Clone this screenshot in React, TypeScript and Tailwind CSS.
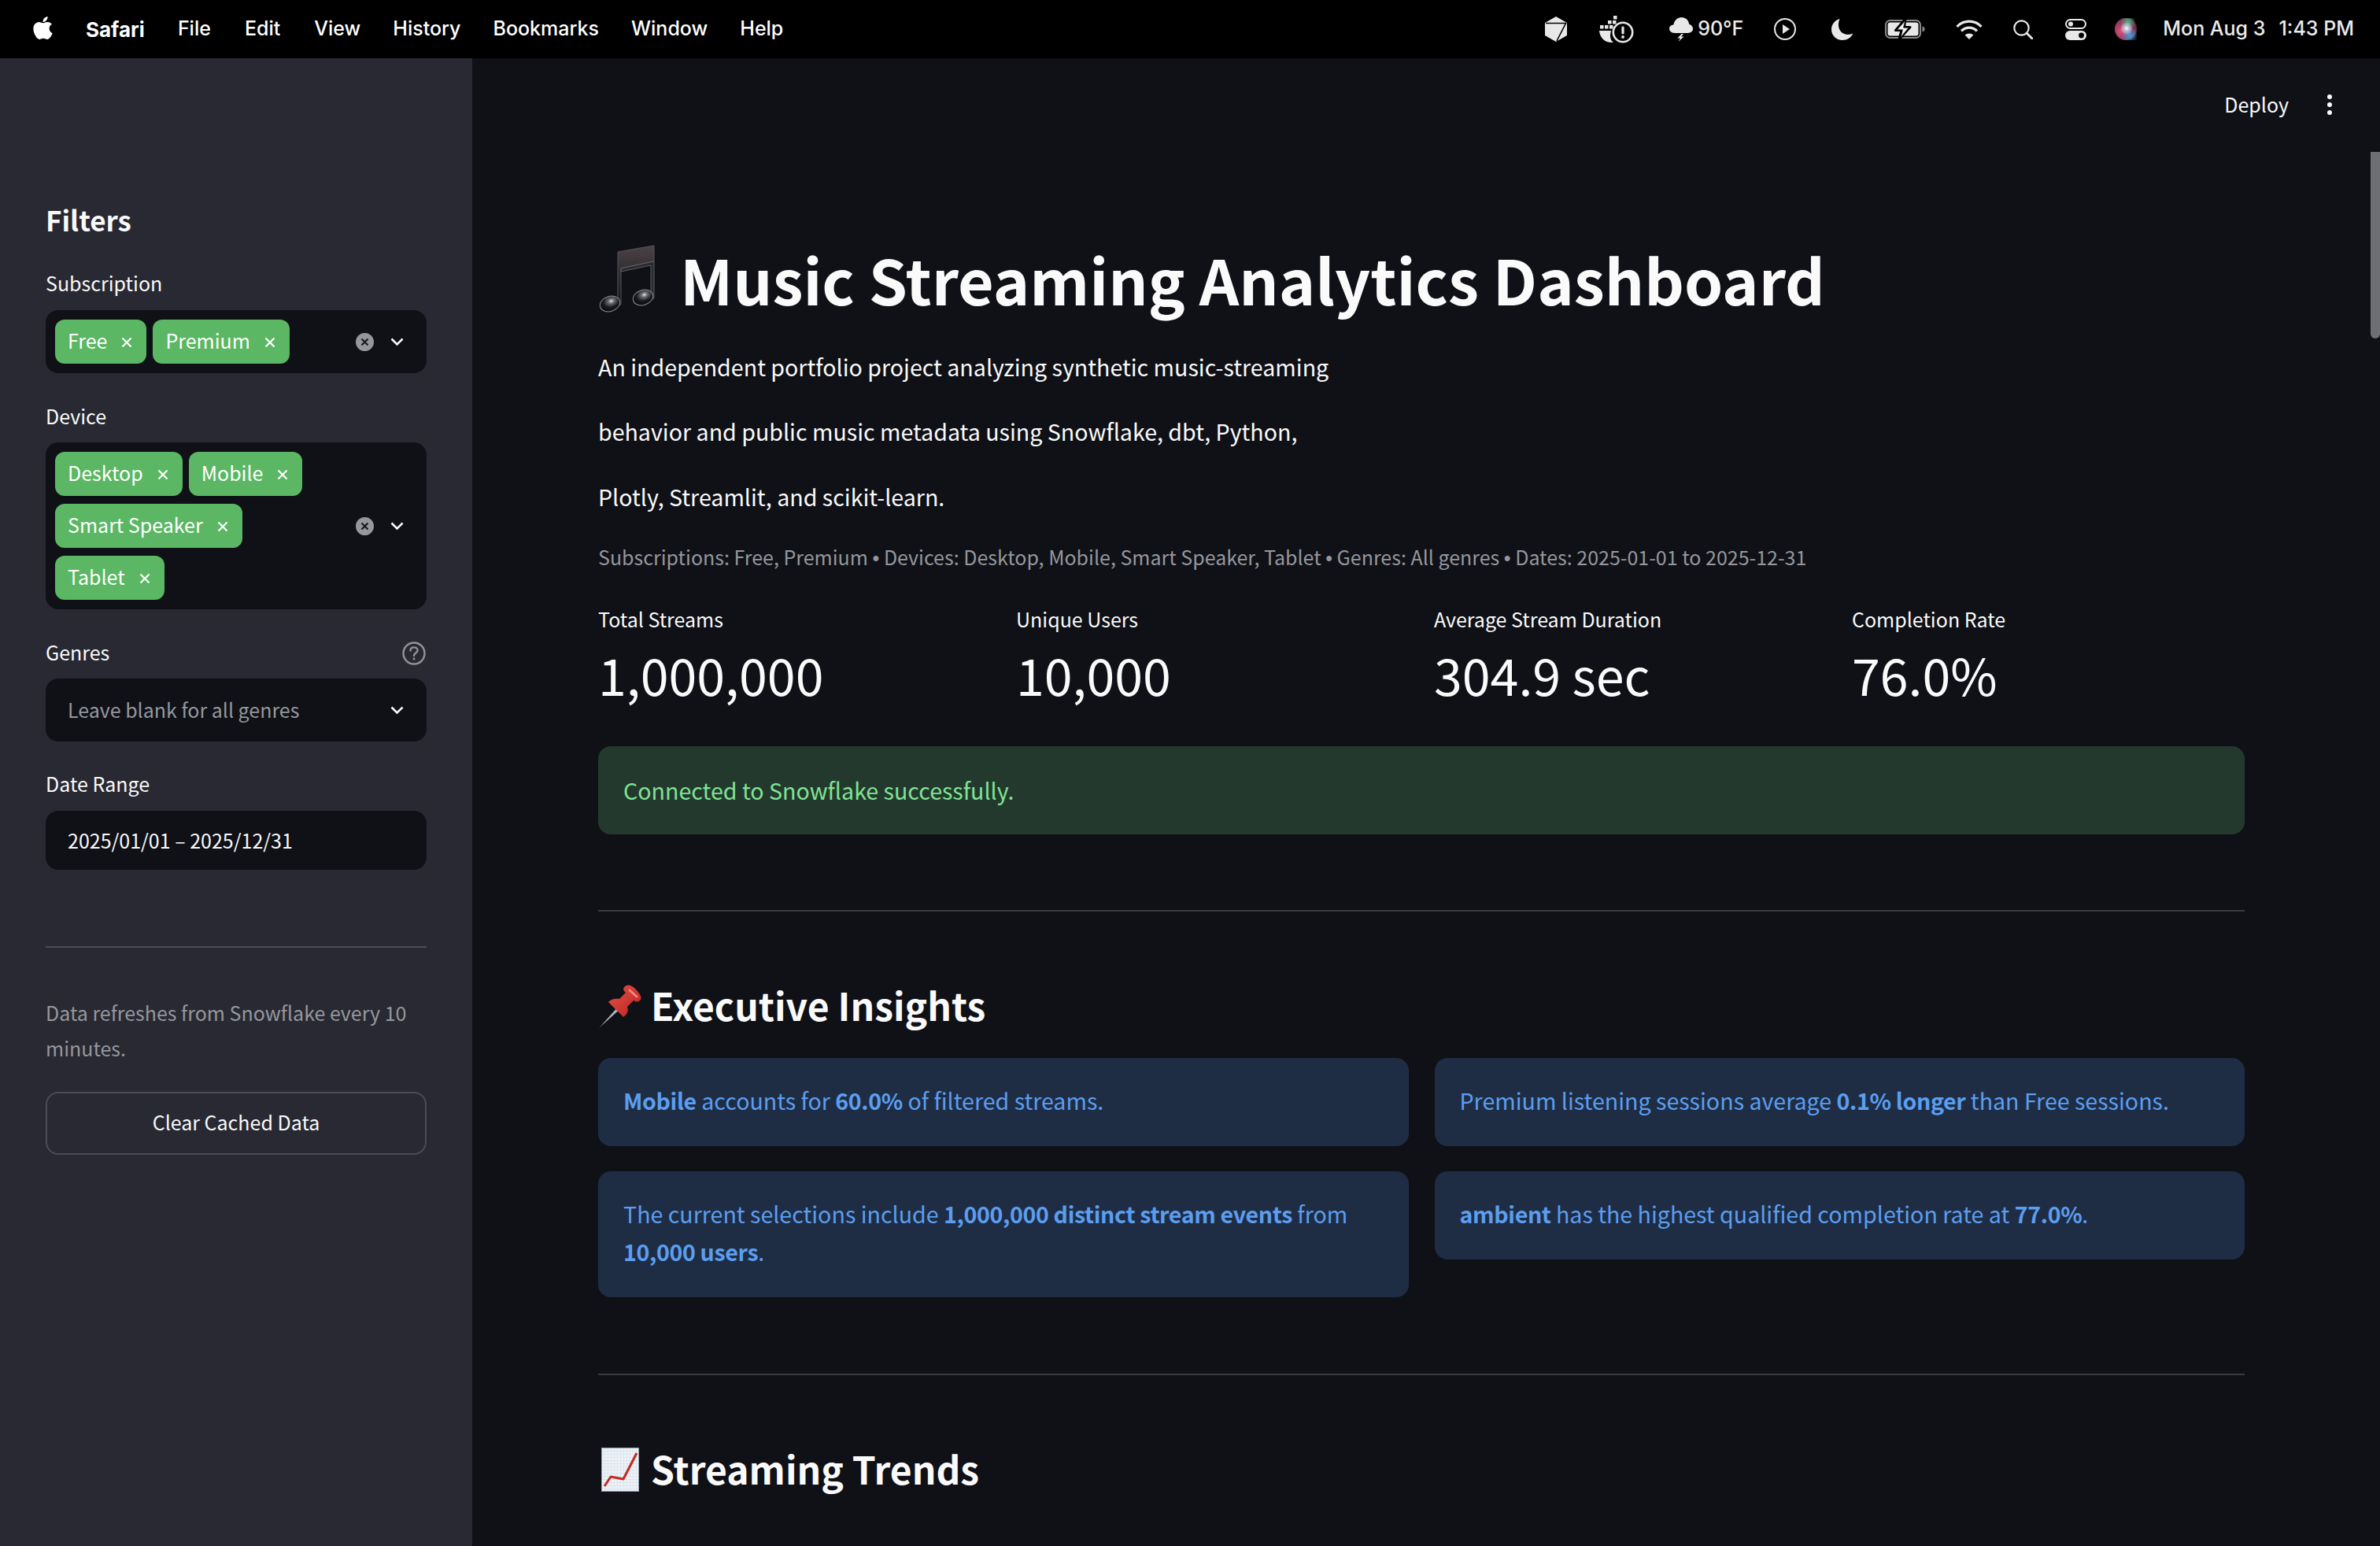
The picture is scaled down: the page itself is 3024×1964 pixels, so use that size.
import React from "react";
import { FaApple } from "react-icons/fa";

const C = "#e8e8e8";

function BoxIcon() {
  return (
    <svg width="28" height="32" viewBox="0 0 28 32" className="shrink-0">
      <path d="M14 0 L28 8 V24 L14 32 L0 24 V8 Z" fill={C} />
      <path d="M1 8.5 H26.5 L15 31" fill="none" stroke="#000" strokeWidth="1.6" />
    </svg>
  );
}
function DockerIcon() {
  return (
    <svg width="44" height="35" viewBox="0 0 44 35" className="shrink-0">
      <g fill={C}>
        <rect x="18" y="0" width="4.5" height="4.5" />
        <rect x="11" y="6" width="4.5" height="4.5" />
        <rect x="17" y="6" width="4.5" height="4.5" />
        <rect x="1" y="12" width="4.5" height="4.5" />
        <rect x="7" y="12" width="4.5" height="4.5" />
        <rect x="13" y="12" width="4.5" height="4.5" />
        <path d="M0 19 H15 C13 26 14 31 18 34 C8 35 1 29 0 19 Z" />
      </g>
      <circle cx="30" cy="21" r="12.2" fill="#000" stroke={C} strokeWidth="2.6" />
      <rect x="28.4" y="13.5" width="3.2" height="10" rx="1.4" fill={C} />
      <circle cx="30" cy="27" r="1.9" fill={C} />
    </svg>
  );
}
function CloudIcon() {
  return (
    <svg width="30" height="31" viewBox="0 0 30 31" className="shrink-0">
      <path d="M7 20 C2.5 20 0 17.6 0 14.6 C0 11.6 2.4 9.4 5.4 9.4 C6.4 3.6 10.6 0 15.6 0 C20.8 0 24.6 3.6 25.2 8.8 C28 9.6 30 11.8 30 14.6 C30 17.8 27.4 20 23.4 20 Z" fill={C} />
      <path d="M15.5 21 L10.5 26.5 H14 L11.5 31 L18.5 24.5 H15 L18 21 Z" fill={C} />
    </svg>
  );
}
function PlayIcon() {
  return (
    <svg width="28" height="28" viewBox="0 0 28 28" className="shrink-0">
      <circle cx="14" cy="14" r="13" fill="none" stroke={C} strokeWidth="2" />
      <path d="M11 8 L20 14 L11 20 Z" fill={C} />
    </svg>
  );
}
function MoonIcon() {
  return (
    <svg width="28" height="27" viewBox="0 0 28 27" className="shrink-0">
      <path d="M10.5 0 C7.5 7 9 14 13.5 17.5 C17.5 20.5 23 20.5 27.5 18.5 C25 23.5 20 27 14 27 C6 27 0 21 0 13.5 C0 7 4.5 1.5 10.5 0 Z" fill={C} />
    </svg>
  );
}
function BatteryIcon() {
  return (
    <svg width="51" height="24" viewBox="0 0 51 24" className="shrink-0">
      <rect x="1" y="1" width="44" height="22" rx="5.5" fill="none" stroke="#8a8a8a" strokeWidth="2" />
      <path d="M47.5 8.5 C49.5 9 50.5 10.2 50.5 12 C50.5 13.8 49.5 15 47.5 15.5 Z" fill="#8a8a8a" />
      <rect x="3.5" y="3.5" width="39" height="17" rx="3.2" fill={C} />
      <path d="M26 -1 L13.5 13.5 H21 L18 25 L32 9.5 H24.5 Z" fill="#111" stroke="#000" strokeWidth="3" strokeLinejoin="round" />
      <path d="M25.5 1.5 L15.5 12.8 H22.5 L20 22.5 L30 10.2 H23.5 Z" fill="#f5f5f5" stroke="#000" strokeWidth="0.6" />
    </svg>
  );
}
function WifiIcon() {
  return (
    <svg width="34" height="25" viewBox="0 0 34 25" className="shrink-0" fill="none" stroke={C} strokeWidth="3.2">
      <path d="M1.5 8.8 C10 0 24 0 32.5 8.8" />
      <path d="M7 14.4 C12.5 8.6 21.5 8.6 27 14.4" />
      <path d="M17 25 L11.6 19.6 C14.5 16.8 19.5 16.8 22.4 19.6 Z" fill={C} stroke="none" />
    </svg>
  );
}
function SearchIcon() {
  return (
    <svg width="25" height="25" viewBox="0 0 25 25" className="shrink-0" fill="none" stroke={C}>
      <circle cx="10.5" cy="10.5" r="9.2" strokeWidth="2.2" />
      <path d="M17 17 L24 24" strokeWidth="2.8" strokeLinecap="round" />
    </svg>
  );
}
function ControlsIcon() {
  return (
    <svg width="27" height="27" viewBox="0 0 27 27" className="shrink-0">
      <rect x="1" y="1" width="25" height="11" rx="5.5" fill="none" stroke={C} strokeWidth="2" />
      <circle cx="7" cy="6.5" r="3" fill={C} />
      <rect x="0" y="15" width="27" height="12" rx="6" fill={C} />
      <circle cx="20.5" cy="21" r="3.4" fill="#000" />
    </svg>
  );
}
function SiriIcon() {
  return (
    <svg width="28" height="28" viewBox="0 0 28 28" className="shrink-0">
      <defs>
        <radialGradient id="siriA" cx="0.3" cy="0.6" r="0.7">
          <stop offset="0" stopColor="#d9507a" />
          <stop offset="1" stopColor="#6a2a48" />
        </radialGradient>
        <radialGradient id="siriB" cx="0.5" cy="0.5" r="0.5">
          <stop offset="0" stopColor="#ffffff" />
          <stop offset="0.45" stopColor="#c8d4e6" stopOpacity="0.75" />
          <stop offset="1" stopColor="#ffffff" stopOpacity="0" />
        </radialGradient>
        <radialGradient id="siriC" cx="0.5" cy="0.5" r="0.5">
          <stop offset="0" stopColor="#3fa0e0" />
          <stop offset="1" stopColor="#3fa0e0" stopOpacity="0" />
        </radialGradient>
        <radialGradient id="siriD" cx="0.5" cy="0.5" r="0.5">
          <stop offset="0" stopColor="#4fb08a" />
          <stop offset="1" stopColor="#4fb08a" stopOpacity="0" />
        </radialGradient>
      </defs>
      <circle cx="14" cy="14" r="14" fill="url(#siriA)" />
      <circle cx="19" cy="22" r="11" fill="url(#siriC)" />
      <circle cx="17" cy="5" r="10" fill="url(#siriD)" />
      <circle cx="15" cy="13" r="8" fill="url(#siriB)" />
    </svg>
  );
}

function MusicEmoji() {
  return (
    <svg width="72" height="86" viewBox="0 0 72 86" className="shrink-0">
      <defs>
        <radialGradient id="noteHead" cx="0.6" cy="0.35" r="0.65">
          <stop offset="0" stopColor="#dfe3e8" />
          <stop offset="0.22" stopColor="#6e7176" />
          <stop offset="0.6" stopColor="#1b1b1f" />
          <stop offset="1" stopColor="#0a0a0c" />
        </radialGradient>
        <linearGradient id="beam" x1="0" y1="0" x2="0" y2="1">
          <stop offset="0" stopColor="#4c4245" />
          <stop offset="1" stopColor="#141418" />
        </linearGradient>
      </defs>
      <path d="M25 9 L71 1 V21 L29 30 V76 H25 Z" fill="url(#beam)" stroke="#55565c" strokeWidth="1" />
      <path d="M29 30 L71 21 V68 H67 V26 L29 34 Z" fill="#2a2b30" stroke="#6a6d73" strokeWidth="0.8" />
      <ellipse cx="15" cy="75" rx="13" ry="9.5" fill="url(#noteHead)" stroke="#8a8e94" strokeWidth="1" transform="rotate(-18 15 75)" />
      <ellipse cx="57" cy="67" rx="13" ry="9.5" fill="url(#noteHead)" stroke="#8a8e94" strokeWidth="1" transform="rotate(-18 57 67)" />
    </svg>
  );
}
function PinEmoji() {
  return (
    <svg width="56" height="56" viewBox="0 0 56 56" className="shrink-0">
      <defs>
        <linearGradient id="pinRed" x1="0" y1="0" x2="1" y2="1">
          <stop offset="0" stopColor="#e8524a" />
          <stop offset="1" stopColor="#b5221f" />
        </linearGradient>
      </defs>
      <path d="M1 55 L26 27 L29 30 Z" fill="#aab0b8" />
      <path d="M33 3 C37 -1 42 0 47 5 C53 11 57 17 53 20 C50 23 47 21 45 20 L37 28 C39 33 37 38 32 41 L13 22 C17 18 22 17 27 18 L35 10 C33 8 31 6 33 3 Z" fill="url(#pinRed)" />
      <path d="M40 7 L49 15" stroke="#f28a80" strokeWidth="3" strokeLinecap="round" />
    </svg>
  );
}
function ChartEmoji() {
  return (
    <svg width="48" height="56" viewBox="0 0 48 56" className="shrink-0">
      <defs>
        <pattern id="grid" width="4" height="4" patternUnits="userSpaceOnUse">
          <rect width="4" height="4" fill="#eef2f6" />
          <path d="M4 0 H0 V4" fill="none" stroke="#b9cbdc" strokeWidth="0.6" />
        </pattern>
      </defs>
      <rect x="0.5" y="0.5" width="47" height="55" fill="url(#grid)" stroke="#9aa2aa" />
      <path d="M4 49 L12 37 L28 40 L45 7" fill="none" stroke="#c22b20" strokeWidth="3" strokeLinejoin="round" />
    </svg>
  );
}

function Tag({ label }: { label: string }) {
  return (
    <span className="flex h-[56px] items-center rounded-[12px] bg-[#5bb763] pl-4 pr-[18px] text-[25px] leading-[50px] text-white">
      <span className="pb-[5px]">{label}</span>
      <svg width="14" height="14" viewBox="0 0 14 14" className="ml-[18px] mt-[2px] shrink-0" fill="none" stroke="#fff" strokeWidth="2.2">
        <path d="M1.5 1.5 L12.5 12.5 M12.5 1.5 L1.5 12.5" />
      </svg>
    </span>
  );
}
function ClearIcon() {
  return (
    <svg width="23" height="23" viewBox="0 0 23 23" className="shrink-0">
      <circle cx="11.5" cy="11.5" r="11.5" fill="#96979c" />
      <path d="M7.5 7.5 L15.5 15.5 M15.5 7.5 L7.5 15.5" stroke="#17181d" strokeWidth="2.2" />
    </svg>
  );
}
function Chevron() {
  return (
    <svg width="17" height="11" viewBox="0 0 17 11" className="shrink-0" fill="none" stroke="#fafafa" strokeWidth="2.6">
      <path d="M1.5 1.5 L8.5 8.5 L15.5 1.5" />
    </svg>
  );
}

function Field({ label, className }: { label: string; className: string }) {
  return <div className={"h-[40px] text-[25px] leading-[38px] text-[#fafafa] " + className}>{label}</div>;
}

function MultiSelect({ tags, className }: { tags: string[]; className: string }) {
  return (
    <div className={"flex items-center rounded-[16px] bg-[#0f1117] pl-[12px] " + className}>
      <div className="flex w-[370px] flex-wrap gap-x-2 gap-y-[10px]">
        {tags.map((t) => (
          <Tag key={t} label={t} />
        ))}
      </div>
      <div className="ml-[12px]">
        <ClearIcon />
      </div>
      <div className="ml-[21px]">
        <Chevron />
      </div>
    </div>
  );
}

function Sidebar() {
  return (
    <aside className="h-full w-[600px] shrink-0 bg-[#282932] pl-[58px] pr-[58px] pt-[181px]">
      <h2 className="h-[50px] text-[35px] font-bold leading-[48px] text-[#fafafa]">Filters</h2>
      <Field label="Subscription" className="mt-[35px]" />
      <MultiSelect tags={["Free", "Premium"]} className="mt-[14px] h-[80px]" />
      <Field label="Device" className="mt-[35px]" />
      <MultiSelect tags={["Desktop", "Mobile", "Smart Speaker", "Tablet"]} className="mt-[13px] h-[212px]" />
      <div className="mt-[35px] flex h-[40px] items-center justify-between">
        <span className="pb-[2px] text-[25px] leading-[38px] text-[#fafafa]">Genres</span>
        <svg width="30" height="30" viewBox="0 0 30 30" className="mr-px mt-[2px]" fill="none" stroke="#93949a" strokeWidth="2.4">
          <circle cx="15" cy="15" r="13.5" />
          <path d="M10.5 11.5 C10.5 8.8 12.5 7.4 15 7.4 C17.7 7.4 19.6 9 19.6 11.2 C19.6 14.4 15 14.6 15 18" strokeLinecap="round" />
          <circle cx="15" cy="22" r="1.5" fill="#93949a" stroke="none" />
        </svg>
      </div>
      <div className="mt-[13px] flex h-[80px] items-center justify-between rounded-[16px] bg-[#0f1117] pl-[28px] pr-[29px]">
        <span className="pb-[3px] text-[25px] leading-[38px] text-[#96979c]">Leave blank for all genres</span>
        <Chevron />
      </div>
      <Field label="Date Range" className="mt-[34px]" />
      <div className="mt-[14px] flex h-[75px] items-center rounded-[16px] bg-[#0f1117] pb-[2px] pl-[28px] text-[25px] leading-[38px] text-[#fafafa]">
        2025/01/01 – 2025/12/31
      </div>
      <div className="mt-[97px] h-[2px] bg-[#4b4c56]" />
      <p className="mt-[60px] text-[25px] leading-[44.5px] text-[#96979c]">Data refreshes from Snowflake every 10 minutes.</p>
      <button className="mt-[34px] flex h-[80px] w-full items-center justify-center rounded-[16px] border-2 border-[#4b4c56] pb-[4px] text-[25px] leading-[38px] text-[#fafafa]">
        Clear Cached Data
      </button>
    </aside>
  );
}

function Metric({ label, value }: { label: string; value: string }) {
  return (
    <div>
      <div className="h-[40px] text-[25px] leading-[38px] text-[#fafafa]">{label}</div>
      <div className="mt-[13px] h-[72px] text-[64.5px] leading-[72px] text-[#fafafa]">{value}</div>
    </div>
  );
}

function Info({ children }: { children: React.ReactNode }) {
  return <div className="rounded-[16px] bg-[#1f2d44] px-[32px] pb-[34px] pt-[30px] text-[28.6px] leading-[48px] text-[#5b9ef0]">{children}</div>;
}

function Dot() {
  return <span className="[font-family:'Liberation_Sans',sans-serif]">•</span>;
}

function Main() {
  const b = "font-bold tracking-[-0.36px]";
  return (
    <main className="relative h-full flex-1 bg-[#0f1117]">
      <div className="flex h-[118px] items-center justify-end pr-[61px]">
        <span className="pb-[2px] text-[25px] leading-[36px] text-[#fafafa]">Deploy</span>
        <div className="ml-[49px] flex flex-col gap-[4px]">
          <span className="h-[6px] w-[6px] rounded-full bg-[#fafafa]" />
          <span className="h-[6px] w-[6px] rounded-full bg-[#fafafa]" />
          <span className="h-[6px] w-[6px] rounded-full bg-[#fafafa]" />
        </div>
      </div>
      <div className="absolute right-0 top-[119px] h-[237px] w-[12px] rounded-b-[6px] bg-[#6e6f74]" />
      <div className="ml-[160px] w-[2092px] pt-[112px]">
        <h1 className="flex h-[100px] items-center text-[78.8px] font-bold leading-[96px] text-[#fafafa]">
          <MusicEmoji />
          <span className="ml-[32px]">Music Streaming Analytics Dashboard</span>
        </h1>
        <div className="mt-[36px] flex flex-col gap-[30.3px] text-[28.6px] leading-[52px] text-[#fafafa]">
          <p>An independent portfolio project analyzing synthetic music-streaming</p>
          <p>behavior and public music metadata using Snowflake, dbt, Python,</p>
          <p>Plotly, Streamlit, and scikit-learn.</p>
        </div>
        <p className="mt-[28px] text-[25px] leading-[44px] text-[#96979c]">
          Subscriptions: Free, Premium <Dot /> Devices: Desktop, Mobile, Smart Speaker, Tablet <Dot /> Genres: All genres <Dot /> Dates: 2025-01-01 to 2025-12-31
        </p>
        <div className="mt-[36px] grid grid-cols-4 gap-x-[32px]">
          <Metric label="Total Streams" value="1,000,000" />
          <Metric label="Unique Users" value="10,000" />
          <Metric label="Average Stream Duration" value="304.9 sec" />
          <Metric label="Completion Rate" value="76.0%" />
        </div>
        <div className="mt-[56px] flex h-[112px] items-center rounded-[16px] bg-[#24392d] px-[32px] text-[28.6px] leading-[44px] text-[#7fe495]">
          Connected to Snowflake successfully.
        </div>
        <div className="mt-[96px] h-[2px] bg-[#3a3b40]" />
        <h2 className="mt-[89px] flex h-[64px] items-center text-[48px] font-bold leading-[60px] text-[#fafafa]">
          <PinEmoji />
          <span className="ml-[11px] pb-[5px]">Executive Insights</span>
        </h2>
        <div className="mt-[33px] grid grid-cols-2 items-start gap-x-[33px] gap-y-[32px]">
          <Info>
            <span className={b}>Mobile</span> accounts for <span className={b}>60.0%</span> of filtered streams.
          </Info>
          <Info>
            Premium listening sessions average <span className={b}>0.1% longer</span> than Free sessions.
          </Info>
          <Info>
            The current selections include <span className={b}>1,000,000 distinct stream events</span> from <span className={b}>10,000 users</span>.
          </Info>
          <Info>
            <span className={b}>ambient</span> has the highest qualified completion rate at <span className={b}>77.0%</span>.
          </Info>
        </div>
        <div className="mt-[97px] h-[2px] bg-[#3a3b40]" />
        <h2 className="mt-[88px] flex h-[64px] items-center text-[48px] font-bold leading-[60px] text-[#fafafa]">
          <span className="ml-[4px]">
            <ChartEmoji />
          </span>
          <span className="ml-[15px] pb-[4px]">Streaming Trends</span>
        </h2>
      </div>
    </main>
  );
}

function MenuBar() {
  const items = ["File", "Edit", "View", "History", "Bookmarks", "Window", "Help"];
  const gaps = ["ml-[42px]", "ml-[43px]", "ml-[43px]", "ml-[41px]", "ml-[41px]", "ml-[41px]", "ml-[41px]"];
  return (
    <header className="flex h-[74px] shrink-0 items-center justify-between bg-black pl-[38px] pr-[33px] [font-family:Inter,sans-serif] text-[25px] font-medium text-[#eaeaea]">
      <div className="flex items-center">
        <FaApple className="mb-[3px] text-[33px] text-white" />
        <span className="ml-[38px] text-[26px] font-bold text-white">Safari</span>
        {items.map((m, i) => (
          <span key={m} className={gaps[i] + " text-white"}>
            {m}
          </span>
        ))}
      </div>
      <div className="flex items-center">
        <BoxIcon />
        <span className="ml-[41px]"><DockerIcon /></span>
        <span className="ml-[45px]"><CloudIcon /></span>
        <span className="ml-[6px]">90°F</span>
        <span className="ml-[39px]"><PlayIcon /></span>
        <span className="ml-[45px]"><MoonIcon /></span>
        <span className="ml-[40px]"><BatteryIcon /></span>
        <span className="ml-[39px]"><WifiIcon /></span>
        <span className="ml-[39px]"><SearchIcon /></span>
        <span className="ml-[41px]"><ControlsIcon /></span>
        <span className="ml-[36px]"><SiriIcon /></span>
        <span className="ml-[33px]">Mon Aug 3</span>
        <span className="ml-[17px]">1:43 PM</span>
      </div>
    </header>
  );
}

export default function App() {
  return (
    <div className="flex h-[1964px] w-[3024px] flex-col overflow-hidden bg-[#0f1117] [font-family:'Noto_Sans_CJK_SC','Noto_Sans',sans-serif]">
      <MenuBar />
      <div className="flex h-[1890px]">
        <Sidebar />
        <Main />
      </div>
    </div>
  );
}
